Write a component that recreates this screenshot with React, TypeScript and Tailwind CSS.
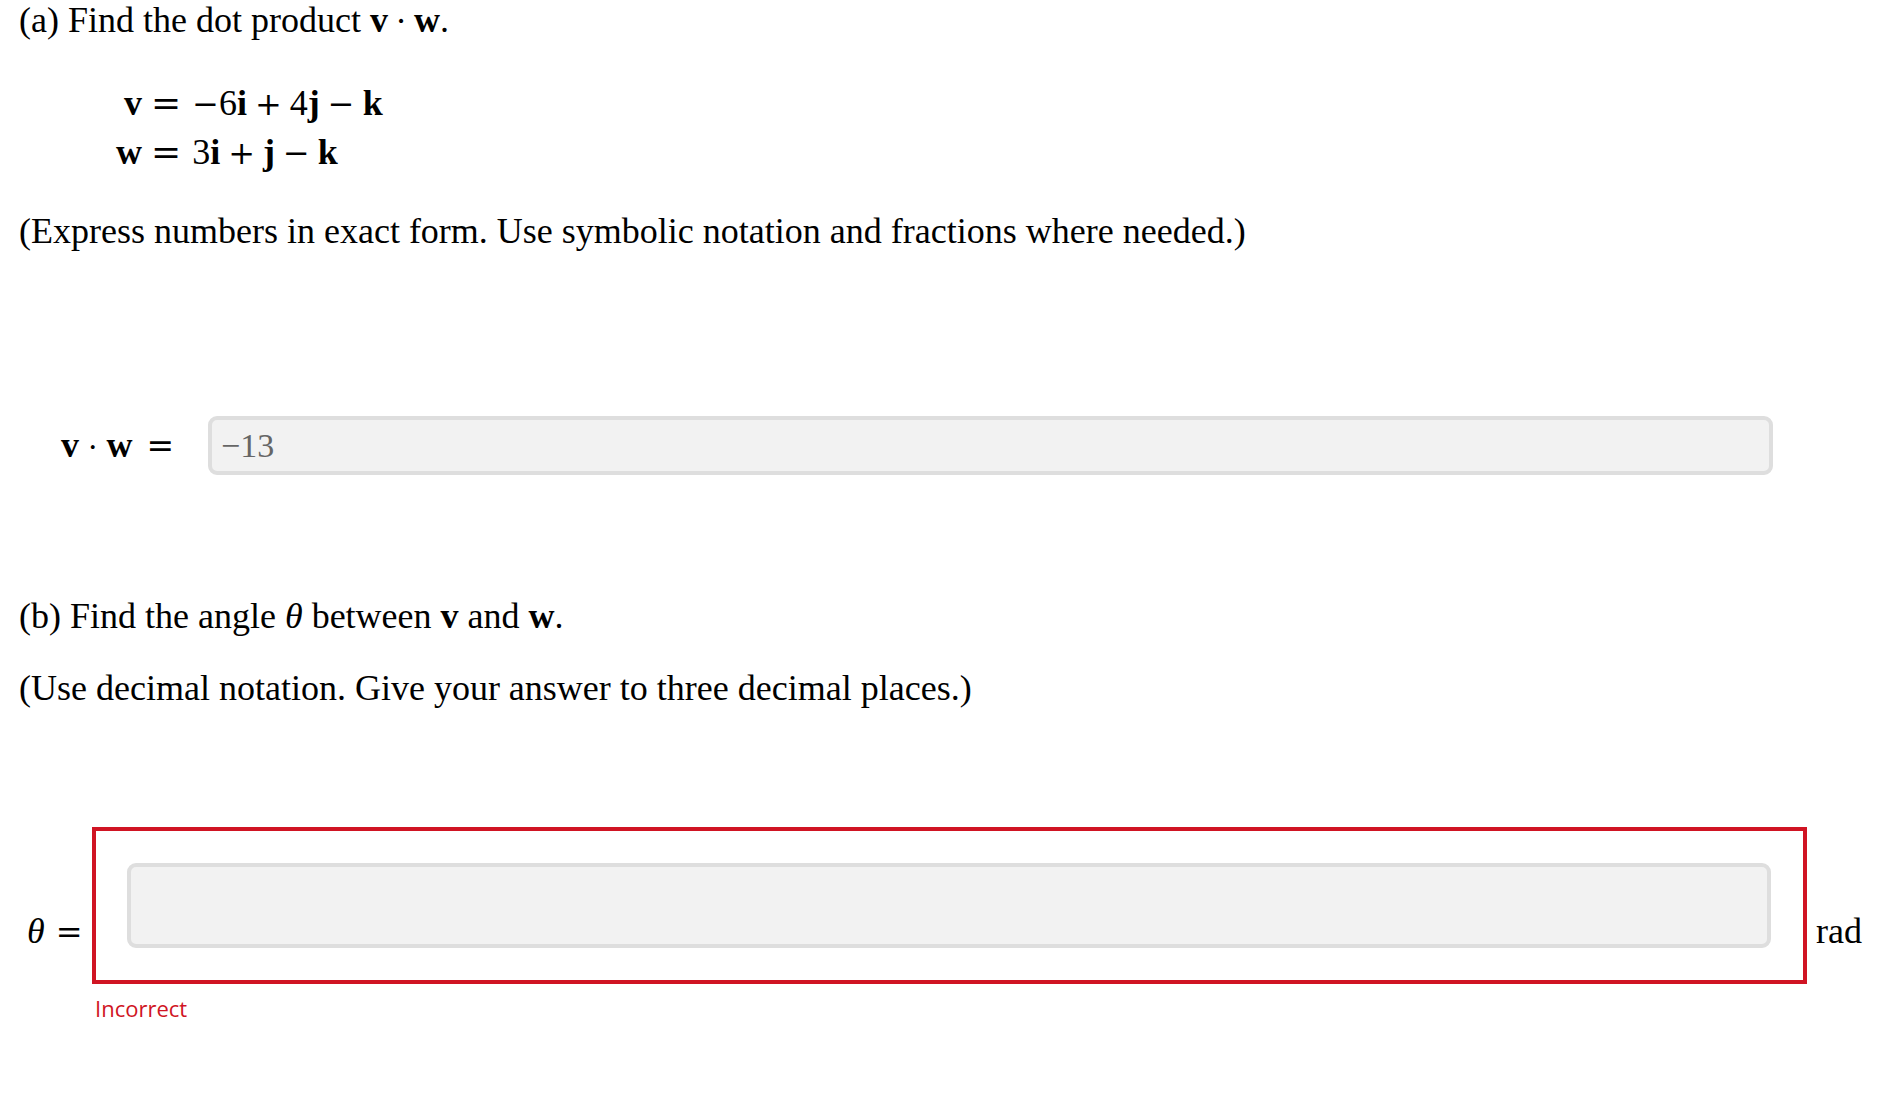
import React from "react";

// bold vector letter
function V({ children }: { children: React.ReactNode }) {
  return <b className="font-bold">{children}</b>;
}

// operator glyph in a wider serif, like the math font
function Op({ children, className = "" }: { children: React.ReactNode; className?: string }) {
  return <span className={`font-['DejaVu_Serif',serif] ${className}`}>{children}</span>;
}

function Field({ value, className = "" }: { value?: string; className?: string }) {
  return (
    <div
      className={`flex items-center rounded-[9px] border-4 border-[#dedede] bg-[#f2f2f2] pl-[9px] text-[34px] text-[#666] ${className}`}
    >
      {value}
    </div>
  );
}

export default function App() {
  return (
    <div className="min-h-screen bg-white pl-[19px] font-['Liberation_Serif',serif] text-[36px] text-black">
      <p className="leading-[40px]">
        (a) Find the dot product <V>v</V>
        <Op className="mx-[8px] text-[32px]">·</Op>
        <V>w</V>.
      </p>

      <div className="mt-[38px] text-[36px] leading-[48px]">
        <div className="flex items-baseline">
          <span className="w-[123px] text-right"><V>v</V></span>
          <Op className="ml-[9px] mr-[11px] text-[36px]">=</Op>
          <Op className="text-[32px]">−</Op>
          <span>6<V>i</V></span>
          <Op className="mx-[8px] text-[32px]">+</Op>
          <span>4<V>j</V></span>
          <Op className="mx-[8px] text-[32px]">−</Op>
          <V>k</V>
        </div>
        <div className="flex items-baseline">
          <span className="w-[123px] text-right"><V>w</V></span>
          <Op className="ml-[9px] mr-[11px] text-[36px]">=</Op>
          <span>3<V>i</V></span>
          <Op className="mx-[8px] text-[32px]">+</Op>
          <V>j</V>
          <Op className="mx-[8px] text-[32px]">−</Op>
          <V>k</V>
        </div>
      </div>

      <p className="mt-[34px] leading-[40px]">
        (Express numbers in exact form. Use symbolic notation and fractions where needed.)
      </p>

      <div className="mt-[165px] flex items-center pr-[109px]">
        <div className="flex w-[189px] items-baseline pl-[42px] leading-[40px]">
          <V>v</V>
          <Op className="mx-[9px] text-[30px]">·</Op>
          <V>w</V>
          <Op className="ml-[14px] text-[33px]">=</Op>
        </div>
        <Field value="−13" className="h-[59px] flex-1" />
      </div>

      <p className="mt-[121px] leading-[40px]">
        (b) Find the angle <i>θ</i> between <V>v</V> and <V>w</V>.
      </p>
      <p className="mt-[32px] leading-[40px]">
        (Use decimal notation. Give your answer to three decimal places.)
      </p>

      <div className="mt-[119px] flex items-start">
        <div className="mt-[84px] flex w-[73px] items-baseline pl-[8px] leading-[40px]">
          <i>θ</i>
          <Op className="ml-[11px] text-[32px]">=</Op>
        </div>
        <div className="flex w-[1715px] flex-col">
          <div className="border-4 border-[#d01423] p-[32px] pl-[31px]">
            <Field className="h-[85px]" />
          </div>
          <div className="mt-[10px] pl-[3px] font-['Open_Sans',sans-serif] text-[22px] leading-[28px] text-[#d01423]">
            Incorrect
          </div>
        </div>
        <div className="ml-[9px] mt-[84px] leading-[40px]">rad</div>
      </div>
    </div>
  );
}
